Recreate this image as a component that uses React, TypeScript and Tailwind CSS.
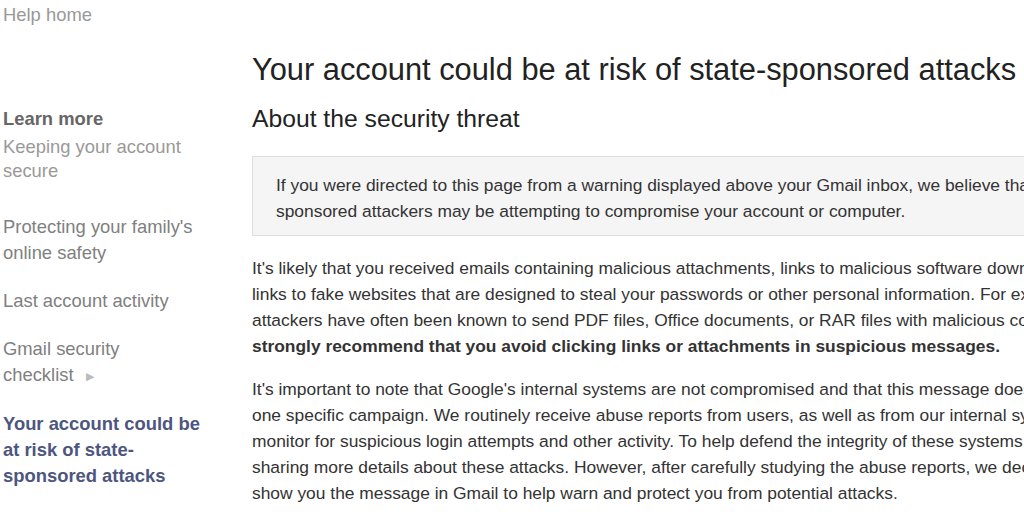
export default function App() {
  const navItem = 'text-[18.4px] leading-[26px] text-[#808080]';

  return (
    <div className="w-[1024px] h-[512px] overflow-hidden bg-white flex font-['Liberation_Sans',Arial,sans-serif]">
      {/* sidebar */}
      <aside className="w-[252px] shrink-0 pl-[3px] pt-[3px]">
        <div className="text-[18.4px] leading-[24px] text-[#999]">Help home</div>
        <div className="mt-[79px] text-[18.4px] leading-[26px] font-bold text-[#666]">Learn more</div>
        <div className="mt-[3px] text-[18.4px] leading-[24px] text-[#999]">
          Keeping your account
          <br />
          secure
        </div>
        <div className={`mt-[31px] ${navItem}`}>
          Protecting your family's
          <br />
          online safety
        </div>
        <div className={`mt-[22px] ${navItem}`}>Last account activity</div>
        <div className={`mt-[22px] ${navItem}`}>
          Gmail security
          <br />
          checklist
          <span className="inline-block ml-[12px] text-[11px] align-middle text-[#bbb]">▶</span>
        </div>
        <div className="mt-[22px] text-[18.4px] leading-[26px] font-bold text-[#4c5680]">
          Your account could be
          <br />
          at risk of state-
          <br />
          sponsored attacks
        </div>
      </aside>

      {/* main content */}
      <main className="flex-1 min-w-0 pt-[52px] text-[#333]">
        <h1 className="text-[30.8px] leading-[36px] text-[#222] whitespace-nowrap">
          Your account could be at risk of state-sponsored attacks
        </h1>
        <h2 className="mt-[16px] text-[24.7px] leading-[30px] text-[#222] whitespace-nowrap">
          About the security threat
        </h2>

        <div className="mt-[22px] w-[900px] border border-[#ddd] bg-[#f5f5f5] pl-[23px] pt-[15px] pb-[11px] text-[17.4px] leading-[26px] whitespace-nowrap">
          If you were directed to this page from a warning displayed above your Gmail inbox, we believe that state-
          <br />
          sponsored attackers may be attempting to compromise your account or computer.
        </div>

        <p className="mt-[19px] text-[17.4px] leading-[26px] whitespace-nowrap">
          It's likely that you received emails containing malicious attachments, links to malicious software downloads, or
          <br />
          links to fake websites that are designed to steal your passwords or other personal information. For example,
          <br />
          attackers have often been known to send PDF files, Office documents, or RAR files with malicious content. We
          <br />
          <strong className="font-bold">
            strongly recommend that you avoid clicking links or attachments in suspicious messages.
          </strong>
        </p>

        <p className="mt-[17px] text-[17.4px] leading-[26px] whitespace-nowrap">
          It's important to note that Google's internal systems are not compromised and that this message does not relate to
          <br />
          one specific campaign. We routinely receive abuse reports from users, as well as from our internal systems that
          <br />
          monitor for suspicious login attempts and other activity. To help defend the integrity of these systems, we're not
          <br />
          sharing more details about these attacks. However, after carefully studying the abuse reports, we decided to
          <br />
          show you the message in Gmail to help warn and protect you from potential attacks.
        </p>
      </main>
    </div>
  );
}
